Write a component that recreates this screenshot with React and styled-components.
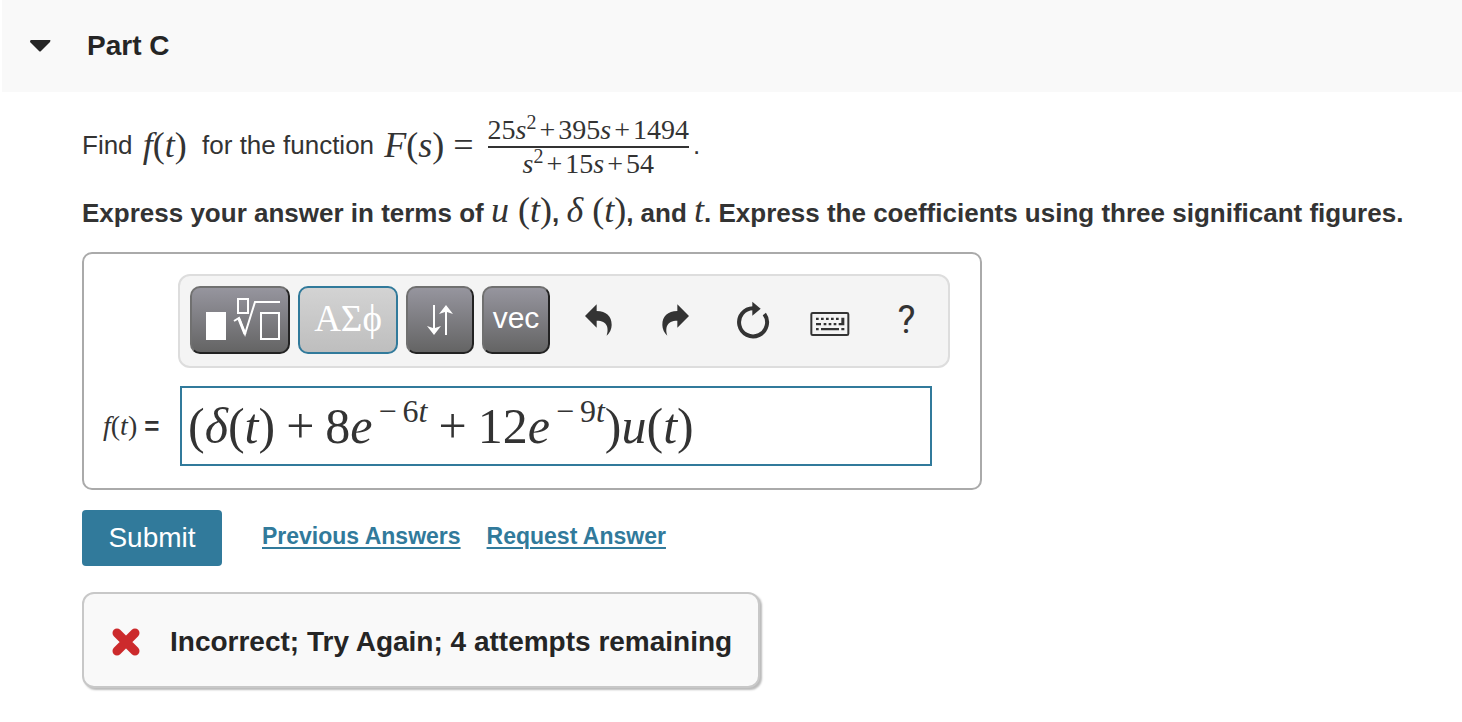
import React from 'react';
import styled, { createGlobalStyle } from 'styled-components';

const GlobalStyle = createGlobalStyle`
    * {
        box-sizing: border-box;
    }

    body {
        margin: 0;
        background: #FFFFFF;
        color: #333333;
        font-family: 'Liberation Sans', Arial, sans-serif;
        font-size: 26px;
    }
`

const Header = styled.header`
    height: 92px;
    margin-left: 2px;
    padding-left: 28px;
    background: #F9F9F9;
    display: flex;
    align-items: center;

    h2 {
        margin: 0;
        color: #252525;
        font-size: 28px;
        line-height: 32px;
    }
`

const Toggle = styled.button`
    width: 57px;
    height: 32px;
    padding: 0;
    border: none;
    background: none;
    display: flex;
    align-items: center;
    cursor: pointer;
`

const Content = styled.main`
    padding: 22px 40px 32px 82px;
`

const Question = styled.p`
    margin: 0;
    height: 66px;
    padding-bottom: 4px;
    display: flex;
    align-items: center;
    white-space: pre;
`

const Instructions = styled.p`
    margin: 16px 0 22px;
    font-weight: 700;
    line-height: 34px;
`

const Math = styled.span`
    font-family: 'Liberation Serif', 'Times New Roman', serif;
    font-size: 36px;
    font-weight: 400;
    line-height: 24px;

    sup {
        font-size: 20px;
        line-height: 0;
        vertical-align: 10px;
    }
`

const Operator = styled.span`
    margin: 0 ${props => props.$gap}px;
`

const Inline = styled(Math)`
    margin: 0 8px 0 3px;
`

const Fraction = styled.span`
    display: inline-flex;
    flex-direction: column;
    align-items: stretch;
    margin: 4px 4px 0 6px;
    text-align: center;

    ${Math} {
        font-size: 28px;
        line-height: 32px;
    }

    ${Math}:first-child {
        border-bottom: 2px solid #333333;
    }
`

const AnswerBox = styled.section`
    max-width: 900px;
    padding: 20px 30px 22px 16px;
    border: 2px solid #AAAAAA;
    border-radius: 10px;
`

const Toolbar = styled.div`
    margin-left: 78px;
    padding: 10px 0 12px 10px;
    border: 2px solid #DDDDDD;
    border-radius: 12px;
    background: #F4F4F4;
    display: flex;
    gap: 8px;
`

const PaletteButton = styled.button`
    width: ${props => props.$wide ? '100px' : '68px'};
    height: 68px;
    padding: ${props => props.$drawn ? '0' : '0 0 4px'};
    flex-shrink: 0;
    border: 2px solid;
    border-color: ${props => props.$active ? '#317A9B' : '#707070 #222222 #222222 #707070'};
    border-radius: 10px;
    background: ${props => props.$active
        ? 'linear-gradient(#D3D3D3, #BEBEBE)'
        : 'linear-gradient(#96959E, #646464)'};
    color: #FFFFFF;
    display: flex;
    align-items: center;
    justify-content: center;
    font-family: ${props => props.$serif ? "'Liberation Serif', serif" : "'Liberation Sans', sans-serif"};
    font-size: ${props => props.$serif ? '37px' : '30px'};
    cursor: pointer;
`

const IconGroup = styled.div`
    flex: 1;
    padding-left: 2px;
    display: flex;
`

const IconButton = styled.button`
    flex: 0 1 77px;
    height: 68px;
    padding: 0;
    border: none;
    background: none;
    color: #333333;
    display: flex;
    align-items: center;
    justify-content: center;
    font-family: Roboto, sans-serif;
    font-size: 38px;
    cursor: pointer;
`

const AnswerRow = styled.div`
    margin-top: 18px;
    padding-right: 18px;
    display: flex;
    align-items: center;
`

const AnswerLabel = styled.span`
    width: 80px;
    padding-left: 3px;
    flex-shrink: 0;
    font-family: 'Liberation Serif', serif;
    font-size: 28px;
    white-space: nowrap;

    b {
        font-family: 'Liberation Sans', sans-serif;
        font-size: 26px;
    }
`

const AnswerField = styled.div`
    flex: 1;
    height: 80px;
    padding-left: 6px;
    border: 2px solid #317A9B;
    outline: none;
    font-family: 'Liberation Serif', serif;
    font-size: 50px;
    line-height: 76px;
    white-space: nowrap;

    sup {
        font-size: 32px;
        line-height: 0;
        vertical-align: 21px;
    }
`

const Actions = styled.div`
    margin-top: 20px;
    display: flex;
    align-items: center;

    a {
        margin-right: 26px;
        color: #317A9B;
        font-size: 23px;
        font-weight: 700;
        line-height: 28px;
        padding-bottom: 4px;
        text-decoration-thickness: 2px;
        text-underline-offset: 3px;
    }
`

const SubmitButton = styled.button`
    width: 140px;
    height: 56px;
    margin-right: 40px;
    border: none;
    border-radius: 4px;
    background: #317A9B;
    color: #FFFFFF;
    font-family: 'Liberation Sans', sans-serif;
    font-size: 28px;
    cursor: pointer;
`

const Feedback = styled.div`
    width: fit-content;
    height: 96px;
    margin-top: 26px;
    padding: 4px 26px 0 28px;
    border: 2px solid #C8C8C8;
    border-radius: 12px;
    background: #F9F9F9;
    box-shadow: 2px 2px 2px #BBBBBB;
    color: #252525;
    display: flex;
    align-items: center;
    gap: 30px;
    font-size: 28px;
    font-weight: 700;
`

const TriangleIcon = () => (
    <svg width='21' height='12' viewBox='0 0 21 12' fill='#252525'>
        <path d='M1 0H20Q21 0 20 2L11 11Q10 12 9 11L0 2Q0 0 1 0Z' />
    </svg>
)

const RootIcon = () => (
    <svg width='82' height='46' viewBox='-6 0 82 46' fill='none' stroke='#FFFFFF' strokeWidth='2'>
        <rect x='1' y='15' width='20' height='28' fill='#FFFFFF' stroke='none' />
        <rect x='33' y='2' width='10' height='14' />
        <path d='M29 24L34 21L40 37L50 5H75' />
        <path d='M34 22L40 37' strokeWidth='3' />
        <rect x='56' y='16' width='18' height='26' />
    </svg>
)

const ArrowsIcon = () => (
    <svg width='28' height='30' viewBox='0 0 28 30' fill='#FFFFFF'>
        <path d='M7 0H9V23L15 21L8 30L1 21L7 23Z' />
        <path d='M19 30H21V7L27 9L20 0L13 9L19 7Z' />
    </svg>
)

const UndoIcon = () => (
    <svg width='29' height='34' viewBox='72 114 87 102' fill='currentColor'>
        <path d='M75 153L110 118V138C139 139 155 153 155 180C155 193 149 204 140 212C147 190 143 167 110 167V188Z' />
    </svg>
)

const RedoIcon = () => (
    <svg width='29' height='34' viewBox='303 114 87 102' fill='currentColor'>
        <path d='M387 153L352 118V138C323 139 307 153 307 180C307 193 313 204 322 212C315 190 319 167 352 167V188Z' />
    </svg>
)

const ResetIcon = () => (
    <svg width='34' height='38' viewBox='525 108 102 114' fill='currentColor'>
        <path d='M576 130A42 42 0 1 0 610 147' fill='none' stroke='currentColor' strokeWidth='12' />
        <path d='M574 110L599 131L574 152Z' />
    </svg>
)

const KeyboardIcon = () => (
    <svg width='40' height='34' viewBox='744 117 120 102' fill='currentColor'>
        <rect x='748' y='147' width='111' height='66' rx='4' fill='none' stroke='currentColor' strokeWidth='6' />
        <path d='M762 161h8v7h-8zM777 161h8v7h-8zM792 161h8v7h-8zM807 161h8v7h-8zM822 161h8v7h-8zM838 161h9v23h-17v-7h8zM762 177h15v7h-15zM785 177h8v7h-8zM800 177h8v7h-8zM815 177h8v7h-8zM762 192h8v7h-8zM777 192h54v7h-54zM838 192h9v7h-9z' />
    </svg>
)

const CrossIcon = () => (
    <svg width='28' height='28' viewBox='0 0 28 28' fill='none' stroke='#CC2A2C' strokeWidth='9' strokeLinecap='round' strokeLinejoin='round'>
        <path d='M5 5L23 23M23 5L5 23' />
    </svg>
)

const App = () => {
    return (
        <>
            <GlobalStyle />
            <Header>
                <Toggle aria-label='Toggle part'><TriangleIcon /></Toggle>
                <h2>Part C</h2>
            </Header>
            <Content>
                <Question>
                    {'Find '}<Inline><i>f</i>(<i>t</i>)</Inline>{' for the function '}
                    <Inline><i>F</i>(<i>s</i>) =</Inline>
                    <Fraction>
                        <Math>25<i>s</i><sup>2</sup><Operator $gap={3}>+</Operator>395<i>s</i><Operator $gap={3}>+</Operator>1494</Math>
                        <Math><i>s</i><sup>2</sup><Operator $gap={3}>+</Operator>15<i>s</i><Operator $gap={3}>+</Operator>54</Math>
                    </Fraction>
                    .
                </Question>
                <Instructions>
                    Express your answer in terms of <Math><i>u</i> (<i>t</i>)</Math>, <Math><i>δ</i> (<i>t</i>)</Math>, and <Math><i>t</i></Math>. Express the coefficients using three significant figures.
                </Instructions>
                <AnswerBox>
                    <Toolbar>
                        <PaletteButton $wide $drawn aria-label='Templates'><RootIcon /></PaletteButton>
                        <PaletteButton $wide $active $serif>ΑΣϕ</PaletteButton>
                        <PaletteButton $drawn aria-label='Arrows'><ArrowsIcon /></PaletteButton>
                        <PaletteButton>vec</PaletteButton>
                        <IconGroup>
                            <IconButton aria-label='Undo'><UndoIcon /></IconButton>
                            <IconButton aria-label='Redo'><RedoIcon /></IconButton>
                            <IconButton aria-label='Reset'><ResetIcon /></IconButton>
                            <IconButton aria-label='Keyboard shortcuts'><KeyboardIcon /></IconButton>
                            <IconButton aria-label='Help'>?</IconButton>
                        </IconGroup>
                    </Toolbar>
                    <AnswerRow>
                        <AnswerLabel id='answer-label'><i>f</i>(<i>t</i>) <b>=</b></AnswerLabel>
                        <AnswerField role='textbox' aria-labelledby='answer-label' contentEditable suppressContentEditableWarning>
                            (<i>δ</i>(<i>t</i>)<Operator $gap={11}>+</Operator>8<i>e</i>
                            <sup><Operator $gap={6}>−</Operator>6<i>t</i></sup>
                            <Operator $gap={11}>+</Operator>12<i>e</i>
                            <sup><Operator $gap={6}>−</Operator>9<i>t</i></sup>)<i>u</i>(<i>t</i>)
                        </AnswerField>
                    </AnswerRow>
                </AnswerBox>
                <Actions>
                    <SubmitButton type='submit'>Submit</SubmitButton>
                    <a href='#previous'>Previous Answers</a>
                    <a href='#request'>Request Answer</a>
                </Actions>
                <Feedback role='status'>
                    <CrossIcon />
                    Incorrect; Try Again; 4 attempts remaining
                </Feedback>
            </Content>
        </>
    )
};

export default App;
